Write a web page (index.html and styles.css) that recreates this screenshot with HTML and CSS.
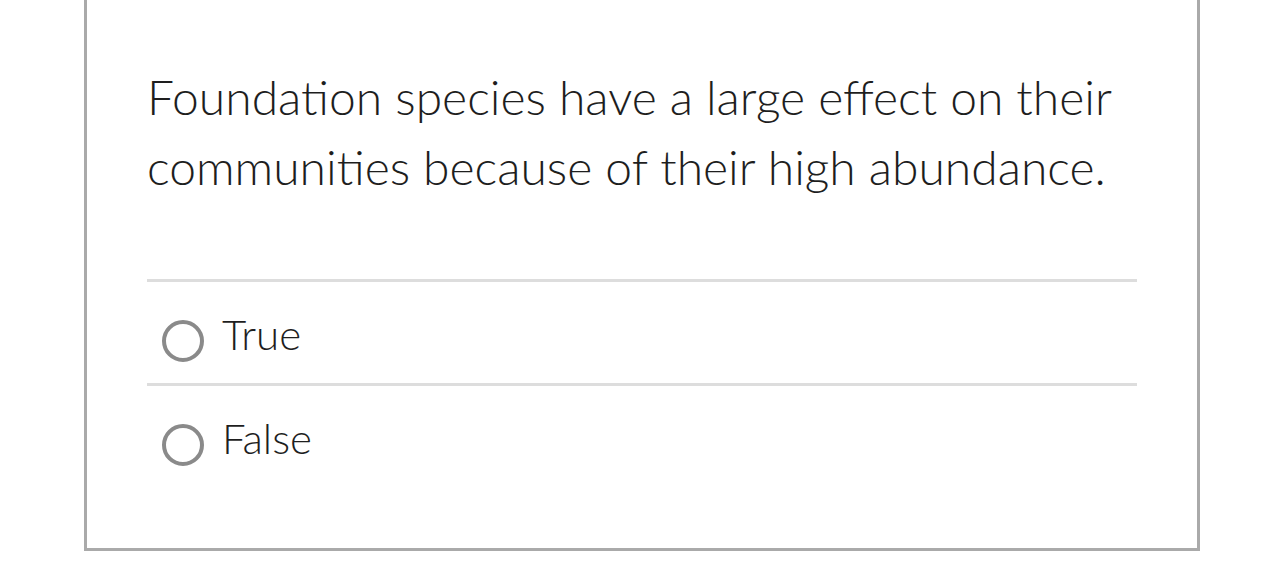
FILE: index.html
```html
<!DOCTYPE html>
<html lang="en">
<head>
<meta charset="utf-8">
<link rel="stylesheet" href="styles.css">
</head>
<body>
<div class="card">
  <p class="question">Foundation species have a large effect on their communities because of their high abundance.</p>
  <div class="answers">
    <label class="option"><span class="radio"></span><span class="label">True</span></label>
    <label class="option"><span class="radio"></span><span class="label">False</span></label>
  </div>
</div>
</body>
</html>
```
FILE: styles.css
```css
html, body {
  margin: 0;
  padding: 0;
  background: #ffffff;
}
body {
  font-family: "Lato Light", Lato, "Noto Sans", sans-serif;
  font-weight: 300;
  color: #1e1e1e;
}
.card {
  box-sizing: border-box;
  margin-left: 84px;
  width: 1116px;
  height: 551px;
  border: 3px solid #aaaaaa;
  border-top: none;
  padding: 0 60px;
}
.question {
  margin: 0;
  padding-top: 62px;
  font-size: 48px;
  line-height: 70px;
  padding-bottom: 77px;
}
.answers {
  display: flex;
  flex-direction: column;
}
.option {
  display: flex;
  align-items: flex-start;
  gap: 18px;
  border-top: 3px solid #dddddd;
  height: 104px;
  padding-left: 15px;
  padding-top: 38px;
  box-sizing: border-box;
  font-size: 42px;
}
.radio {
  box-sizing: border-box;
  width: 42px;
  height: 42px;
  border: 4px solid #8a8a8a;
  border-radius: 50%;
  flex: none;
}
.label {
  line-height: 1.2;
  margin-top: -11px;
}
```
